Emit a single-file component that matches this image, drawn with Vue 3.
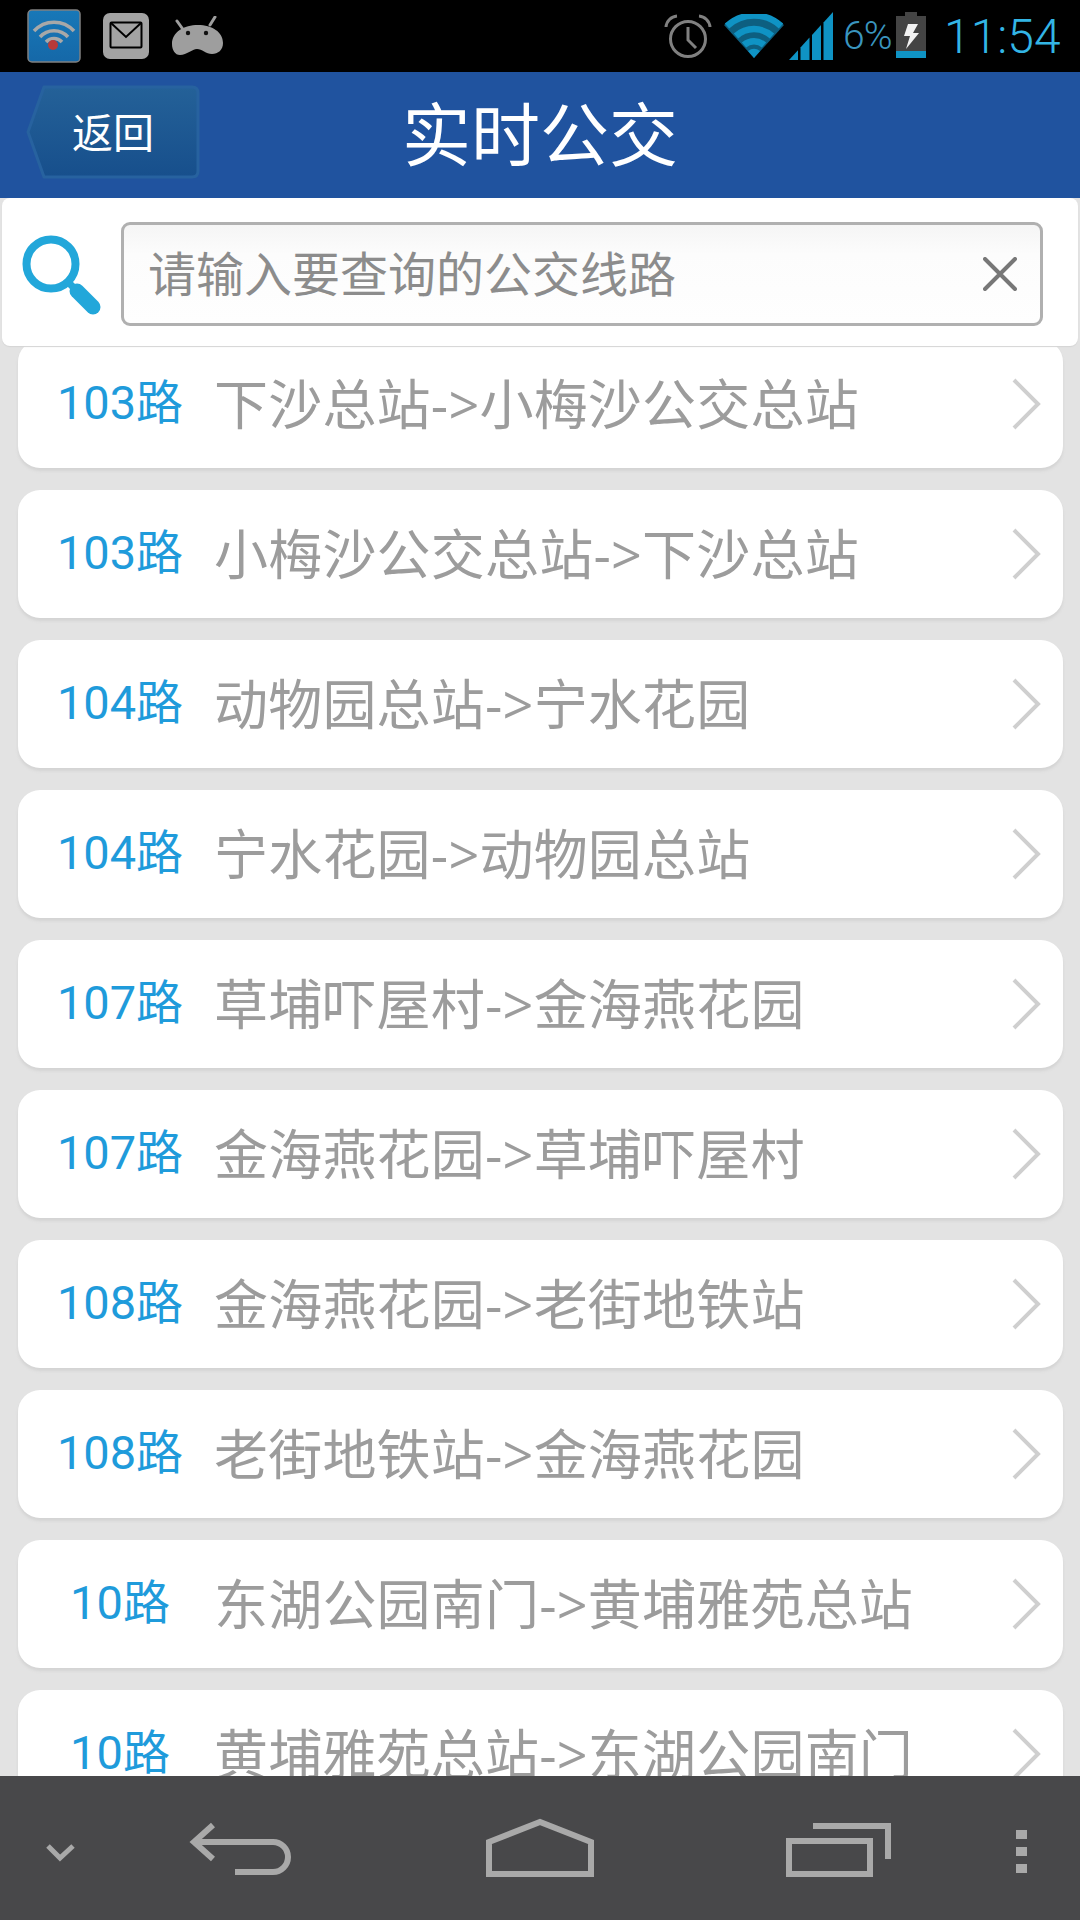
<script setup>
const routes = [
  ['103路', '下沙总站->小梅沙公交总站'],
  ['103路', '小梅沙公交总站->下沙总站'],
  ['104路', '动物园总站->宁水花园'],
  ['104路', '宁水花园->动物园总站'],
  ['107路', '草埔吓屋村->金海燕花园'],
  ['107路', '金海燕花园->草埔吓屋村'],
  ['108路', '金海燕花园->老街地铁站'],
  ['108路', '老街地铁站->金海燕花园'],
  ['10路', '东湖公园南门->黄埔雅苑总站'],
  ['10路', '黄埔雅苑总站->东湖公园南门'],
]
</script>

<template>
  <div class="screen">
    <div class="status">
      <svg class="st-app" width="54" height="54" viewBox="0 0 54 54">
        <defs>
          <linearGradient id="appg" x1="0" y1="0" x2="0" y2="1">
            <stop offset="0" stop-color="#1878b8" />
            <stop offset="1" stop-color="#1568a8" />
          </linearGradient>
        </defs>
        <rect x="1" y="1" width="52" height="52" rx="4" fill="url(#appg)" stroke="#808080" stroke-width="1.5" />
        <g fill="none" stroke="#a8a8a8" stroke-width="3.5">
          <path d="M7 22 A27 27 0 0 1 47 22" />
          <path d="M13 28 A19 19 0 0 1 41 28" />
          <path d="M19 33 A11 11 0 0 1 35 33" />
        </g>
        <circle cx="26" cy="36" r="5" fill="#b83a3a" />
      </svg>
      <svg class="st-mail" width="46" height="46" viewBox="0 0 46 46">
        <rect width="46" height="46" rx="7" fill="#a3a3a3" />
        <rect x="7.5" y="9.5" width="31" height="25" rx="1" fill="#a3a3a3" stroke="#000" stroke-width="2" />
        <path d="M8 10 L23 24 L38 10" fill="none" stroke="#000" stroke-width="2" />
      </svg>
      <svg class="st-droid" width="52" height="40" viewBox="0 0 52 40">
        <path d="M5 5 L10 12 M43 1 L38 9" stroke="#9e9e9e" stroke-width="3" stroke-linecap="round" />
        <path d="M0 28 C0 16 12 9 26 9 C40 9 51 16 51 27 C51 34 46 38 40 38 C34 38 30 33 25 33 C20 33 15 39 8 39 C3 39 0 34 0 28 Z" fill="#9e9e9e" />
        <circle cx="16" cy="17" r="2.2" fill="#111" />
        <circle cx="34" cy="17" r="2.2" fill="#111" />
      </svg>
      <span class="st-space"></span>
      <svg class="st-alarm" width="48" height="46" viewBox="0 0 48 46">
        <circle cx="24" cy="26" r="17.5" fill="none" stroke="#808080" stroke-width="3" />
        <path d="M24 14 V27 L32 35" fill="none" stroke="#808080" stroke-width="3" />
        <path d="M2 14 A12 12 0 0 1 13 3 M46 14 A12 12 0 0 0 35 3" fill="none" stroke="#808080" stroke-width="3" />
      </svg>
      <svg class="st-wifi" width="60" height="44" viewBox="0 0 60 44">
        <path d="M0 11 A44 44 0 0 1 60 11 L30 44 Z" fill="#0d5f80" />
        <g fill="none" stroke="#0f93c4" stroke-width="6.5">
          <path d="M3 12 A40 40 0 0 1 57 12" />
          <path d="M12 22 A27 27 0 0 1 48 22" />
          <path d="M20 31 A15 15 0 0 1 40 31" />
        </g>
        <path d="M24 37 L30 44 L36 37 A10 10 0 0 0 24 37 Z" fill="#0f93c4" />
      </svg>
      <svg class="st-signal" width="44" height="49" viewBox="0 0 44 49">
        <g fill="#0f93c4">
          <path d="M0 49 L9 39.2 V49 Z" />
          <path d="M11.5 36.5 L20.5 26.6 V49 H11.5 Z" />
          <path d="M23 23.9 L32 14.1 V49 H23 Z" />
          <path d="M34.5 11.4 L44 1 V49 H34.5 Z" />
        </g>
      </svg>
      <span class="st-pct">6%</span>
      <svg class="st-batt" width="30" height="46" viewBox="0 0 30 46">
        <rect x="9" y="0" width="12" height="5" fill="#444" />
        <rect x="0" y="4" width="30" height="35" fill="#444" />
        <rect x="0" y="39" width="30" height="7" fill="#0f93c4" />
        <path d="M12 12 H22 L17 21 H23 L10 37 L14 24 H8 Z" fill="#f2f2f2" />
      </svg>
      <span class="st-time">11:54</span>
    </div>

    <header class="header">
      <div class="back">
        <svg class="back-bg" width="174" height="94" viewBox="0 0 174 94">
          <defs>
            <linearGradient id="backg" x1="0" y1="0" x2="0" y2="1">
              <stop offset="0" stop-color="#246198" />
              <stop offset="1" stop-color="#174f8c" />
            </linearGradient>
          </defs>
          <path d="M18 2 H166 Q172 2 172 8 V86 Q172 92 166 92 H18 L2 47 Z" fill="url(#backg)" stroke="#27629f" stroke-width="3" stroke-linejoin="round" />
        </svg>
        <span class="back-text">返回</span>
      </div>
      <h1 class="title">实时公交</h1>
      <span></span>
    </header>

    <div class="search">
      <svg class="search-icon" width="80" height="82" viewBox="0 0 80 82">
        <circle cx="29" cy="29" r="24.5" fill="none" stroke="#22a7da" stroke-width="8" />
        <path d="M46 47 L54 55" stroke="#22a7da" stroke-width="7" />
        <path d="M55 56 L71 72" stroke="#22a7da" stroke-width="15" stroke-linecap="round" />
      </svg>
      <div class="input">
        <span class="placeholder">请输入要查询的公交线路</span>
        <svg width="34" height="34" viewBox="0 0 34 34">
          <path d="M2 2 L32 32 M32 2 L2 32" stroke="#777" stroke-width="4" stroke-linecap="round" />
        </svg>
      </div>
    </div>

    <div class="list">
      <div class="list-inner">
        <div v-for="(r, i) in routes" :key="i" class="card">
          <span class="code">{{ r[0] }}</span>
          <span class="route">{{ r[1] }}</span>
          <svg class="chev" width="30" height="52" viewBox="0 0 30 52">
            <path d="M3 2 L27 26 L3 50" fill="none" stroke="#cfcfcf" stroke-width="4" />
          </svg>
        </div>
      </div>
    </div>

    <nav class="nav">
      <svg width="1080" height="144" viewBox="0 1776 1080 144">
        <g fill="none" stroke="#a9a9a9" stroke-width="6">
          <path d="M48 1846 L60 1858 L73 1846" stroke-width="5" />
          <path d="M197 1842 H273 A15 15 0 0 1 273 1872 H235" />
          <path d="M213 1825 L194 1842 L213 1859" />
          <path d="M489 1842 L540 1822 L591 1842 V1874 H489 Z" />
          <rect x="789" y="1841" width="81" height="33" />
          <path d="M813 1826 H888 V1859" />
        </g>
        <g fill="#a9a9a9">
          <rect x="1016" y="1830" width="11" height="9" />
          <rect x="1016" y="1847" width="11" height="9" />
          <rect x="1016" y="1864" width="11" height="9" />
        </g>
      </svg>
    </nav>
  </div>
</template>

<style>
html, body { margin: 0; background: #e3e3e3; }
</style>

<style scoped>
.screen {
  width: 1080px;
  height: 1920px;
  display: flex;
  flex-direction: column;
  overflow: hidden;
  background: #e3e3e3;
  font-family: Roboto, "Noto Sans CJK SC", sans-serif;
}
.status {
  height: 72px;
  flex: none;
  background: #000;
  display: flex;
  align-items: center;
  padding-left: 27px;
  box-sizing: border-box;
}
.st-mail { margin-left: 22px; }
.st-droid { margin-left: 23px; }
.st-space { flex: 1; }
.st-wifi { margin-left: 12px; margin-top: -1px; }
.st-signal { margin-left: 5px; margin-top: -1px; }
.st-pct {
  font-size: 39px;
  font-weight: 300;
  color: #3a95bf;
  margin-left: 10px;
  width: 53px;
  letter-spacing: -1px;
}
.st-batt { margin-left: 0; margin-top: -2px; }
.st-time {
  font-size: 48px;
  font-weight: 300;
  color: #33b5e5;
  width: 136px;
  margin-left: 18px;
}
.header {
  height: 126px;
  flex: none;
  background: #20539f;
  display: grid;
  grid-template-columns: 1fr auto 1fr;
  align-items: center;
  padding-left: 26px;
  box-sizing: border-box;
}
.back {
  position: relative;
  width: 174px;
  height: 94px;
  margin-bottom: 6px;
  display: flex;
  align-items: center;
  padding-left: 46px;
  box-sizing: border-box;
}
.back-bg { position: absolute; left: 0; top: 0; }
.back-text {
  position: relative;
  color: #fff;
  font-size: 41px;
  line-height: 1;
  margin-top: 4px;
}
.title {
  margin: 4px 0 0 -26px;
  color: #fff;
  font-size: 69px;
  font-weight: 400;
  line-height: 1;
}
.search {
  height: 148px;
  flex: none;
  margin: 0 2px;
  background: #fff;
  border-radius: 8px;
  box-shadow: 0 1px 1px #d4d4d4;
  display: flex;
  align-items: center;
  padding: 4px 0 0 20px;
  box-sizing: border-box;
  position: relative;
  z-index: 1;
}
.search-icon { flex: none; margin-top: 4px; }
.input {
  margin-left: 19px;
  width: 922px;
  height: 104px;
  box-sizing: border-box;
  border: 3px solid #b0b0b0;
  border-radius: 9px;
  background: linear-gradient(#f5f5f5, #fcfcfc 30%, #fefefe);
  display: flex;
  align-items: center;
  justify-content: space-between;
  padding: 0 23px 0 24px;
}
.placeholder {
  font-size: 48px;
  line-height: 1;
  color: #8c8c8c;
  margin-top: 3px;
}
.list {
  flex: 1;
  min-height: 0;
  overflow: hidden;
  padding: 0 17px 0 18px;
}
.list-inner {
  margin-top: -6px;
  display: flex;
  flex-direction: column;
  gap: 22px;
}
.card {
  height: 128px;
  flex: none;
  background: #fff;
  border-radius: 22px;
  box-shadow: 0 3px 3px #d4d4d4;
  display: flex;
  align-items: center;
  padding-left: 29px;
  box-sizing: border-box;
}
.code {
  width: 146px;
  text-align: center;
  font-size: 47px;
  line-height: 1;
  color: #1f9bdb;
  flex: none;
  margin-bottom: 4px;
}
.route {
  margin-left: 21px;
  font-family: "Open Sans", "Noto Sans CJK SC", sans-serif;
  font-size: 54px;
  letter-spacing: 0.2px;
  line-height: 1;
  color: #9c9c9c;
  flex: 1;
  white-space: nowrap;
}
.chev { flex: none; margin-right: 22px; }
.nav {
  height: 144px;
  flex: none;
  background: #48484a;
  position: relative;
  z-index: 1;
}
.nav svg { display: block; }
</style>
